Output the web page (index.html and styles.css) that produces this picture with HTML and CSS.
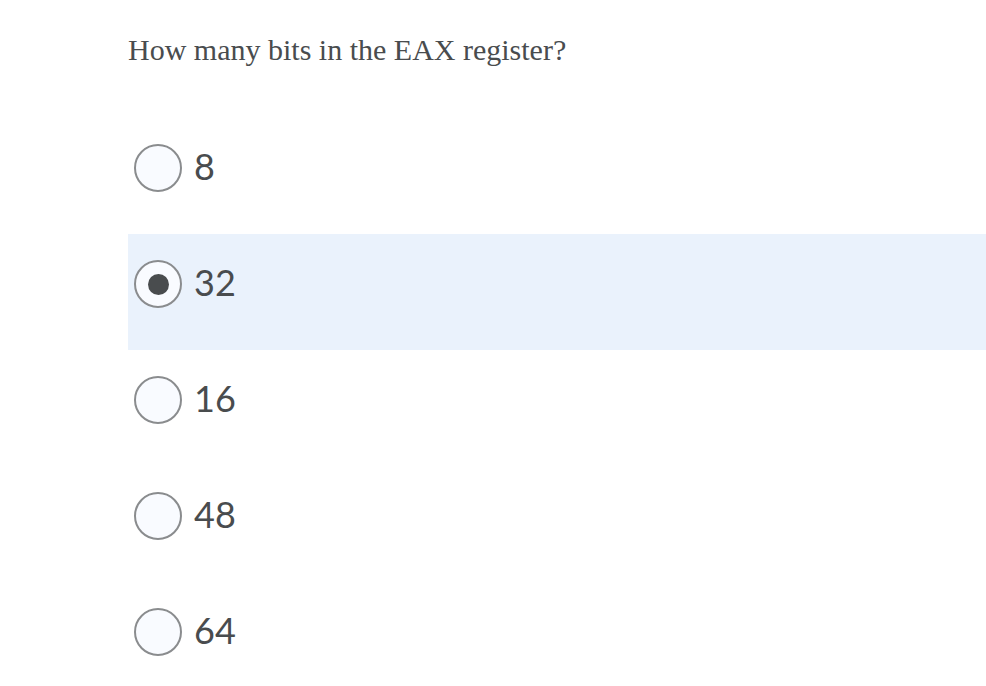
FILE: index.html
```html
<!DOCTYPE html>
<html lang="en">
<head>
    <meta charset="UTF-8">
    <title>Quiz Question</title>
    <link rel="stylesheet" href="styles.css">
</head>
<body>
    <div class="question">
        <p class="question-text">How many bits in the EAX register?</p>
        <div class="options">
            <label class="option">
                <input type="radio" name="eax" value="8">
                <span class="radio"></span>
                <span class="option-label">8</span>
            </label>
            <label class="option selected">
                <input type="radio" name="eax" value="32" checked>
                <span class="radio"></span>
                <span class="option-label">32</span>
            </label>
            <label class="option">
                <input type="radio" name="eax" value="16">
                <span class="radio"></span>
                <span class="option-label">16</span>
            </label>
            <label class="option">
                <input type="radio" name="eax" value="48">
                <span class="radio"></span>
                <span class="option-label">48</span>
            </label>
            <label class="option">
                <input type="radio" name="eax" value="64">
                <span class="radio"></span>
                <span class="option-label">64</span>
            </label>
        </div>
    </div>
</body>
</html>
```
FILE: styles.css
```css
body {
    margin: 0;
    background: #fff;
    color: #494c4e;
    overflow: hidden;
}
.question {
    padding-left: 128px;
}
.question-text {
    font-family: "Liberation Serif", "Times New Roman", serif;
    font-size: 30px;
    line-height: 34px;
    margin: 33px 0 51px;
}
.options {
    display: flex;
    flex-direction: column;
}
.option {
    display: flex;
    align-items: center;
    height: 116px;
    box-sizing: border-box;
    padding: 0 0 16px 6px;
    cursor: pointer;
}
.option.selected {
    background: #eaf2fc;
}
.option input {
    display: none;
}
.radio {
    width: 44px;
    height: 44px;
    border: 2px solid #8a8c8e;
    border-radius: 50%;
    background: #f9fbff;
    display: flex;
    align-items: center;
    justify-content: center;
    flex-shrink: 0;
}
.option input:checked + .radio::after {
    content: "";
    width: 21px;
    height: 21px;
    border-radius: 50%;
    background: #494c4e;
}
.option-label {
    font-family: Lato, "Noto Sans", sans-serif;
    font-size: 36px;
    line-height: 40px;
    margin-left: 12px;
    margin-top: -5px;
}
```
